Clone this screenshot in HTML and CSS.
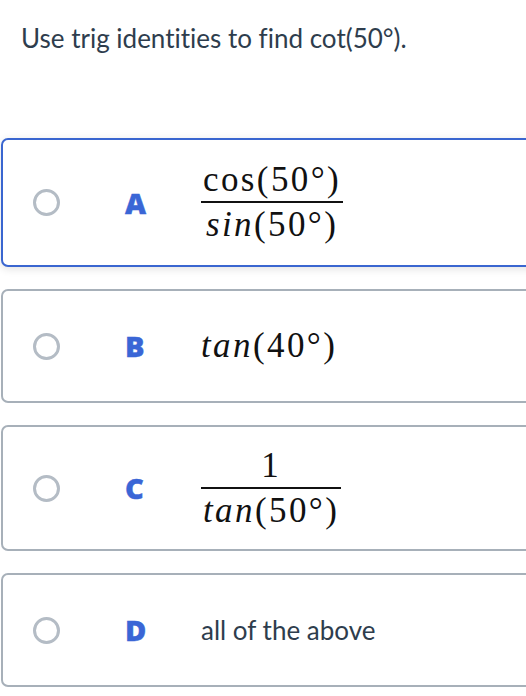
FILE: index.html
```html
<!DOCTYPE html>
<html>
<head>
<meta charset="utf-8">
<link rel="stylesheet" href="styles.css">
</head>
<body>
<div class="page">
  <h1 class="question">Use trig identities to find cot(50°).</h1>
  <div class="options">
    <div class="card selected tall">
      <span class="radio"></span>
      <span class="letter">A</span>
      <span class="math frac">
        <span class="num">cos(50°)</span>
        <span class="den"><i>sin</i>(50°)</span>
      </span>
    </div>
    <div class="card">
      <span class="radio"></span>
      <span class="letter">B</span>
      <span class="math"><i>tan</i>(40°)</span>
    </div>
    <div class="card tall">
      <span class="radio"></span>
      <span class="letter">C</span>
      <span class="math frac">
        <span class="num">1</span>
        <span class="den"><i>tan</i>(50°)</span>
      </span>
    </div>
    <div class="card">
      <span class="radio"></span>
      <span class="letter">D</span>
      <span class="text">all of the above</span>
    </div>
  </div>
</div>
</body>
</html>
```

FILE: styles.css
```css
html, body {
  margin: 0;
  padding: 0;
  background: #ffffff;
  overflow: hidden;
}

.page {
  width: 526px;
  font-family: Lato, "Open Sans", sans-serif;
  color: #2e3d4d;
  font-variant-ligatures: none;
}

.question {
  margin: 0;
  padding: 22px 0 0 21px;
  font-size: 26px;
  font-weight: 400;
  line-height: 32px;
  height: 128px;
  box-sizing: border-box;
}

.options {
  display: flex;
  flex-direction: column;
  gap: 22px;
  padding: 10px 0 10px 1px;
  overflow: hidden;
}

.card {
  width: 560px;
  box-sizing: border-box;
  min-height: 114px;
  border: 2px solid #a7b0b9;
  border-radius: 7px;
  display: flex;
  align-items: center;
  background: #fff;
  flex: none;
}

.card.tall {
  min-height: 126px;
}

.card.selected {
  border-color: #3a66d0;
  min-height: 129px;
  box-shadow: 0 2px 8px rgba(0, 0, 0, 0.12);
}

.radio {
  width: 21px;
  height: 21px;
  border: 3px solid #b4bcc5;
  border-radius: 50%;
  margin-left: 30px;
  flex: none;
}

.letter {
  margin-left: 65px;
  width: 76px;
  flex: none;
  font-family: "Open Sans", Lato, sans-serif;
  font-weight: 800;
  font-size: 29px;
  line-height: 34px;
  color: #3a66d6;
  -webkit-text-stroke: 0.4px #3a66d6;
}

.math {
  font-family: "Liberation Serif", serif;
  font-size: 35px;
  letter-spacing: 2.4px;
  color: #111;
  line-height: 40px;
}

.math i {
  font-style: italic;
}

.frac {
  display: inline-flex;
  flex-direction: column;
  align-items: center;
}

.frac .num {
  padding: 0 2px 1px;
}

.frac .den {
  border-top: 2px solid #111;
  padding: 2px 2px 0;
  align-self: stretch;
  text-align: center;
}

.text {
  font-family: Lato, "Open Sans", sans-serif;
  font-size: 26px;
  color: #2e3d4d;
}
```
